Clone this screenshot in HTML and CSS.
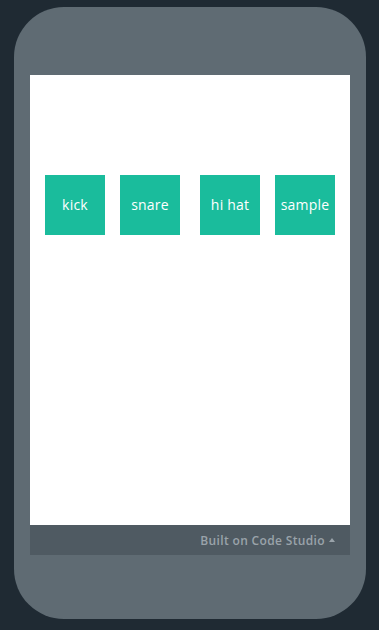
FILE: index.html
```html
<!DOCTYPE html>
<html>
<head>
<meta charset="utf-8">
<link rel="stylesheet" href="styles.css">
</head>
<body>
<div class="phone">
  <div class="screen">
    <div class="pads">
      <button class="pad">kick</button>
      <button class="pad">snare</button>
      <button class="pad pad-gap">hi hat</button>
      <button class="pad">sample</button>
    </div>
  </div>
  <div class="footer">
    <span class="built">Built on Code Studio</span>
    <span class="arrow"></span>
  </div>
</div>
</body>
</html>
```
FILE: styles.css
```css
html, body {
  margin: 0;
  padding: 0;
  background: #1f2a33;
  width: 379px;
  height: 630px;
  overflow: hidden;
}
.phone {
  margin: 7px 0 0 14px;
  width: 352px;
  height: 612px;
  box-sizing: border-box;
  padding: 68px 16px 0 16px;
  background: #5f6b73;
  border-radius: 50px;
  display: flex;
  flex-direction: column;
}
.screen {
  width: 320px;
  height: 450px;
  background: #ffffff;
  box-sizing: border-box;
  padding: 100px 0 0 15px;
}
.pads {
  display: flex;
  gap: 15px;
}
.pad {
  width: 60px;
  height: 60px;
  border: none;
  padding: 0 0 2px 0;
  margin: 0;
  background: #1abc9c;
  color: #ffffff;
  font-family: "Open Sans", "Liberation Sans", sans-serif;
  font-size: 14px;
  letter-spacing: 0.2px;
  display: flex;
  align-items: center;
  justify-content: center;
}
.pad-gap {
  margin-left: 5px;
}
.footer {
  width: 320px;
  height: 30px;
  background: #4f5a62;
  display: flex;
  align-items: center;
  justify-content: flex-end;
  box-sizing: border-box;
  padding-right: 15px;
  gap: 4px;
}
.built {
  color: #9aa3aa;
  font-family: "Open Sans", "Liberation Sans", sans-serif;
  font-weight: 600;
  font-size: 12px;
  letter-spacing: 0.35px;
}
.arrow {
  width: 0;
  height: 0;
  border-left: 3px solid transparent;
  border-right: 3px solid transparent;
  border-bottom: 4px solid #9aa3aa;
}
```
